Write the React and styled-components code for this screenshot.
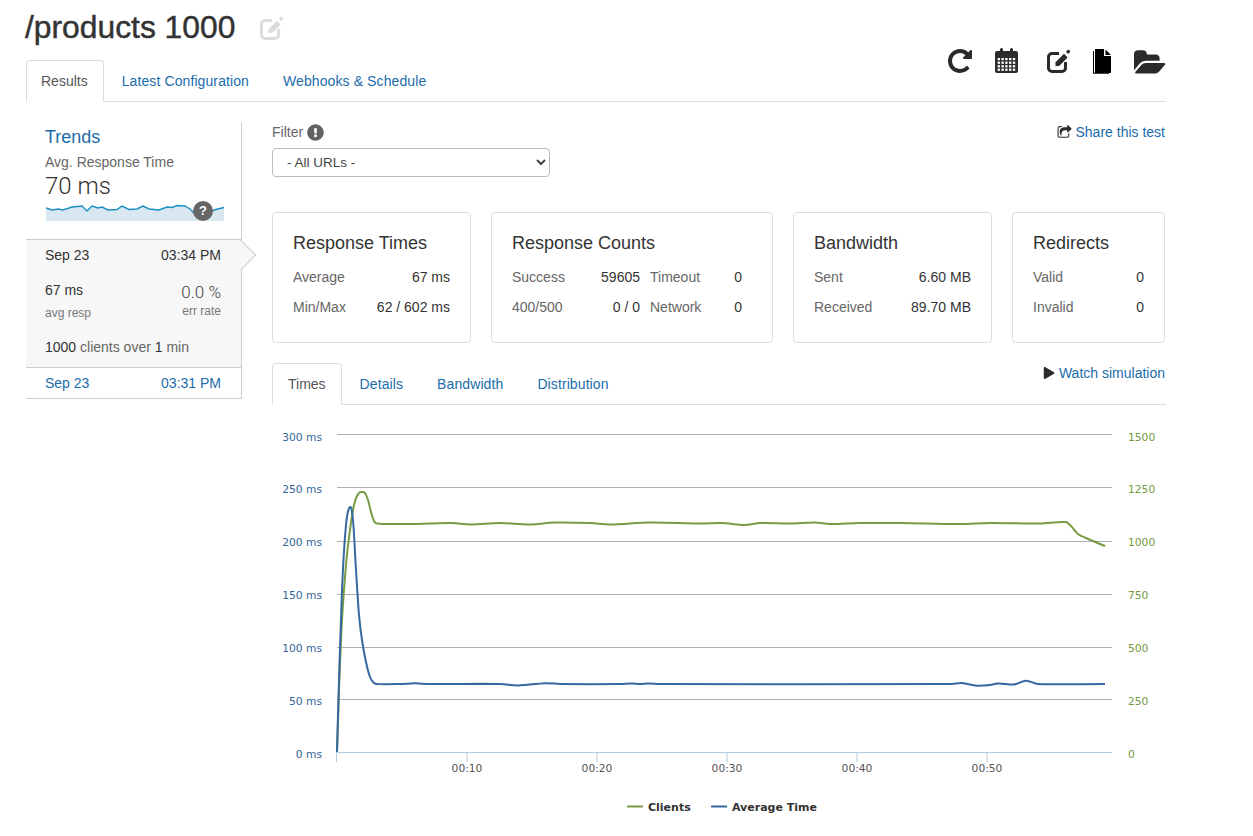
import React from 'react';
import styled, { createGlobalStyle } from 'styled-components';
import { FaExclamationCircle, FaPlay } from 'react-icons/fa';

const GlobalStyle = createGlobalStyle`
  html, body {
    margin: 0;
    background: #fff;
  }
  body {
    font-family: "Liberation Sans", Arial, sans-serif;
    font-size: 14px;
    line-height: 20px;
    color: #333;
  }
  * {
    box-sizing: border-box;
  }
`;

const Page = styled.div`
  width: 1140px;
  margin-left: 26px;
  height: 836px;
`;

const Title = styled.h1`
  display: flex;
  align-items: center;
  height: 60px;
  margin: 0 0 0 -1px;
  padding-bottom: 7px;
  font-size: 31.8px;
  line-height: 40px;
  font-weight: 400;
  color: #333;
  -webkit-text-stroke: 0.45px #333;
  svg {
    margin-left: 24px;
    margin-top: 2px;
    color: #dcdcdc;
    -webkit-text-stroke: 0;
  }
`;

const TopRow = styled.div`
  display: flex;
  justify-content: space-between;
  height: 42px;
  border-bottom: 1px solid #ddd;
`;

const Tabs = styled.div`
  display: flex;
  height: 42px;
`;

const Tab = styled.a`
  display: block;
  height: 42px;
  padding: 10px 15px 0 ${(p) => p.$left || 15}px;
  margin-right: 2px;
  letter-spacing: ${(p) => (p.$active ? '0' : '0.1px')};
  color: ${(p) => (p.$active ? '#555' : '#1b6cab')};
  background: ${(p) => (p.$active ? '#fff' : 'transparent')};
  border: 1px solid ${(p) => (p.$active ? '#ddd' : 'transparent')};
  border-bottom-color: ${(p) => (p.$active ? '#fff' : 'transparent')};
  border-radius: 4px 4px 0 0;
`;

const Toolbar = styled.div`
  display: flex;
  align-items: center;
  height: 28px;
  margin-top: -13px;
`;

const ToolSlot = styled.span`
  display: flex;
  justify-content: center;
  align-items: center;
  width: 32px;
  margin-left: ${(p) => p.$gap || 0}px;
  margin-bottom: ${(p) => p.$lift || 0}px;
  color: #2b2b2b;
`;

const Body = styled.div`
  display: flex;
  margin-top: 20px;
`;

const Side = styled.aside`
  width: 216px;
  height: 277px;
  border-right: 1px solid #ccc;
  border-bottom: 1px solid #ccc;
  flex-shrink: 0;
`;

const Trends = styled.div`
  height: 117px;
  padding: 4px 17px 0 19px;
`;

const TrendsTitle = styled.a`
  display: block;
  font-size: 18px;
  line-height: 22px;
  color: #1b6cab;
`;

const TrendsLabel = styled.div`
  margin-top: 4px;
  font-size: 14px;
  line-height: 20px;
  color: #666;
`;

const TrendsValue = styled.div`
  font-family: Roboto, "Liberation Sans", sans-serif;
  font-size: 24px;
  line-height: 28px;
  font-weight: 300;
  color: #333;
`;

const Spark = styled.div`
  position: relative;
  width: 178px;
  height: 20px;
  margin: 1px 0 0 1px;
`;

const HelpBadge = styled.span`
  position: absolute;
  right: 11px;
  top: 0;
  width: 20px;
  height: 20px;
  border-radius: 50%;
  background: #666;
  color: #fff;
  font-size: 13px;
  font-weight: 700;
  line-height: 20px;
  text-align: center;
`;

const ActiveRun = styled.div`
  position: relative;
  height: 129px;
  padding: 5px 20px 0 19px;
  background: #f7f7f7;
  border-top: 1px solid #ccc;
  border-bottom: 1px solid #ccc;
  &::after {
    content: '';
    position: absolute;
    top: 4px;
    right: -11px;
    width: 21px;
    height: 21px;
    background: #f7f7f7;
    border-top: 1px solid #ccc;
    border-right: 1px solid #ccc;
    transform: rotate(45deg) scale(0.98);
  }
`;

const RunRow = styled.div`
  display: flex;
  justify-content: space-between;
  position: relative;
  z-index: 1;
`;

const RunDate = styled(RunRow)`
  line-height: 20px;
  color: #333;
`;

const RunStats = styled(RunRow)`
  margin-top: 14px;
  line-height: 20px;
`;

const RunStat = styled.div`
  text-align: ${(p) => (p.$right ? 'right' : 'left')};
`;

const StatLight = styled.div`
  font-family: Roboto, "Liberation Sans", sans-serif;
  font-size: 17px;
  font-weight: 300;
  line-height: 22px;
  margin-top: 2px;
  color: #444;
`;

const StatDark = styled.div`
  line-height: 22px;
  color: #333;
`;

const StatCaption = styled.div`
  font-size: 12px;
  line-height: 20px;
  color: #777;
  margin-top: ${(p) => (p.$up ? '-2px' : '2px')};
`;

const RunSummary = styled.div`
  margin-top: 14px;
  color: #666;
  b {
    font-weight: 400;
    color: #333;
  }
`;

const OtherRun = styled.a`
  display: flex;
  justify-content: space-between;
  height: 30px;
  padding: 5px 20px 0 19px;
  color: #1b6cab;
`;

const Main = styled.main`
  margin-left: 30px;
  width: 894px;
`;

const FilterRow = styled.div`
  display: flex;
  justify-content: space-between;
`;

const FilterLabel = styled.div`
  display: flex;
  align-items: center;
  gap: 4px;
  height: 20px;
  color: #666;
  svg {
    color: #616161;
  }
`;

const ShareLink = styled.a`
  display: flex;
  align-items: center;
  gap: 4px;
  height: 20px;
  padding-right: 1px;
  color: #1b6cab;
  svg {
    color: #2b2b2b;
  }
`;

const FilterSelect = styled.select`
  display: block;
  width: 278px;
  height: 29px;
  margin-top: 6px;
  padding: 0 0 0 10px;
  font-family: "Liberation Sans", Arial, sans-serif;
  font-size: 13.5px;
  color: #444;
  background: #fff;
  border: 1px solid #bbb;
  border-radius: 4px;
`;

const Cards = styled.div`
  display: grid;
  grid-template-columns: 199px 282px 199px 153px;
  gap: 20px;
  margin-top: 35px;
`;

const Card = styled.section`
  height: 131px;
  padding: 20px 20px 0;
  border: 1px solid #ddd;
  border-radius: 4px;
`;

const CardTitle = styled.h3`
  margin: 0 0 14px;
  font-size: 18px;
  line-height: 20px;
  font-weight: 400;
  color: #333;
`;

const Stats = styled.div`
  display: grid;
  grid-template-columns: ${(p) => p.$cols || '1fr auto'};
  grid-auto-rows: 30px;
  line-height: 20px;
`;

const StatLabel = styled.span`
  color: #666;
`;

const StatValue = styled.span`
  text-align: right;
  color: #333;
`;

const SubTabRow = styled.div`
  display: flex;
  justify-content: space-between;
  height: 42px;
  margin-top: 20px;
  border-bottom: 1px solid #ddd;
`;

const WatchLink = styled.a`
  display: flex;
  align-items: center;
  gap: 4px;
  height: 20px;
  padding-right: 1px;
  color: #1b6cab;
  svg {
    color: #2b2b2b;
  }
`;

const Chart = styled.svg`
  display: block;
  text {
    font-family: "DejaVu Sans", Verdana, sans-serif;
    font-size: 10.7px;
  }
  text.legend {
    font-size: 11px;
    font-weight: 700;
    fill: #333;
  }
`;

const glyphs = {
  repeat:
    'M1664 256v448q0 26-19 45t-45 19h-448q-42 0-59-40-17-39 14-69l138-138q-148-137-349-137-104 0-198.5 40.5t-163.5 109.5-109.5 163.5-40.5 198.5 40.5 198.5 109.5 163.5 163.5 109.5 198.5 40.5q119 0 225-52t179-147q7-10 23-12 15 0 25 9l137 138q9 8 9.5 20.5t-7.5 22.5q-109 132-264 204.5t-327 72.5q-156 0-298-61t-245-164-164-245-61-298 61-298 164-245 245-164 298-61q147 0 284.5 55.5t244.5 156.5l130-129q29-31 70-14 39 17 39 59z',
  share:
    'M1472 989v259q0 119-84.5 203.5t-203.5 84.5h-832q-119 0-203.5-84.5t-84.5-203.5v-832q0-119 84.5-203.5t203.5-84.5h255q13 0 22.5 9.5t9.5 22.5q0 27-26 32-77 26-133 60-10 4-16 4h-112q-66 0-113 47t-47 113v832q0 66 47 113t113 47h832q66 0 113-47t47-113v-214q0-19 18-29 28-13 54-37 16-16 35-8 21 9 21 29zm237-496l-384 384q-18 19-45 19-12 0-25-5-39-17-39-59v-192h-160q-323 0-438 131-119 137-74 473 3 23-20 34-8 2-12 2-16 0-26-13-10-14-21-31t-39.5-68.5-49.5-99.5-38.5-114-17.5-122q0-49 3.5-91t14-90 28-88 47-81.5 68.5-74 94.5-61.5 124.5-48.5 159.5-30.5 196.5-11h160v-192q0-42 39-59 13-5 25-5 26 0 45 19l384 384q19 19 19 45t-19 45z',
  folder:
    'M1879 952q0 31-31 66l-336 396q-43 51-120.5 86.5t-143.5 35.5h-1088q-34 0-60.5-13t-26.5-43q0-31 31-66l336-396q43-51 120.5-86.5t143.5-35.5h1088q34 0 60.5 13t26.5 43zm-343-344v160h-832q-94 0-197 47.5t-164 119.5l-337 396-5 6q0-4-.5-12.5t-.5-12.5v-960q0-92 66-158t158-66h320q92 0 158 66t66 158v32h544q92 0 158 66t66 158z',
};

const Glyph = ({ name, size, box = '0 0 1792 1792' }) => (
  <svg width={size} height={size} viewBox={box} fill="currentColor">
    <path d={glyphs[name]} />
  </svg>
);

const EditIcon = () => (
  <svg width="25" height="24" viewBox="0 0 25 24" fill="currentColor">
    <path
      d="M13 4.5H6A3.5 3.5 0 0 0 2.5 8v11A3.5 3.5 0 0 0 6 22.5h10a3.5 3.5 0 0 0 3.5-3.5v-6"
      fill="none"
      stroke="currentColor"
      strokeWidth="3"
    />
    <path d="M9.5 17v-3.8L18 4.8l3.6 3.6L13.2 17z" />
    <path d="M20 2.8l1.7-1.7a1 1 0 0 1 1.4 0l.7.7a1 1 0 0 1 0 1.4L22 5z" />
  </svg>
);

const CalendarIcon = () => (
  <svg width="23" height="25" viewBox="0 0 23 25">
    <path
      d="M2 3h3V1.5a1.5 1.5 0 0 1 3 0V3h7V1.5a1.5 1.5 0 0 1 3 0V3h3a2 2 0 0 1 2 2v18a2 2 0 0 1-2 2H2a2 2 0 0 1-2-2V5a2 2 0 0 1 2-2z"
      fill="#2b2b2b"
    />
    {[10, 13.6, 17.2, 20.6].map((y) =>
      [2.6, 6.4, 10.2, 14, 17.8].map((x) => (
        <rect key={`${x}-${y}`} x={x} y={y} width="2.4" height="2.2" fill="#fff" />
      ))
    )}
  </svg>
);

const FilesIcon = () => (
  <svg width="20" height="25" viewBox="0 0 20 25">
    <path d="M0 2h1v21.8h15v1H0z" fill="#000" />
    <path d="M2 0h9v7h7v17H2z" fill="#000" />
    <path d="M12.5 0.5L18 6h-5.5z" fill="#000" />
  </svg>
);

// smooth line through the points, tangents from the neighbours so x never runs back
const smooth = (pts) => {
  const slope = (i) => {
    const a = pts[i - 1] || pts[i];
    const b = pts[i + 1] || pts[i];
    return (b[1] - a[1]) / (b[0] - a[0]);
  };
  let d = `M${pts[0][0]} ${pts[0][1]}`;
  for (let i = 0; i < pts.length - 1; i++) {
    const [x1, y1] = pts[i];
    const [x2, y2] = pts[i + 1];
    const dx = (x2 - x1) / 3;
    const c1y = y1 + slope(i) * dx;
    const c2y = y2 - slope(i + 1) * dx;
    d += `C${(x1 + dx).toFixed(1)} ${c1y.toFixed(1)} ${(x2 - dx).toFixed(1)} ${c2y.toFixed(1)} ${x2} ${y2}`;
  }
  return d;
};

const clientsLine = [
  [337, 752], [339, 690], [342, 620], [346, 565], [350, 530], [354, 505], [358, 494], [362, 492],
  [365, 493], [368, 500], [371, 512], [374, 521], [377, 523.5], [400, 524], [430, 523.5], [452, 523],
  [470, 524.5], [500, 523], [530, 524.5], [555, 522.5], [590, 523], [610, 524.5], [650, 522.5],
  [700, 523.5], [722, 523], [745, 525], [760, 523], [790, 523.5], [815, 522.5], [830, 524],
  [860, 523], [900, 523], [960, 524], [990, 523], [1040, 523.5], [1066, 522], [1071, 526],
  [1078, 534], [1086, 538], [1105, 546],
];

const timeLine = [
  [337, 752], [339, 680], [342, 590], [346, 525], [350, 507], [353, 520], [356, 570], [359, 615],
  [362, 640], [366, 662], [370, 677], [374, 683], [378, 684], [400, 684], [415, 683.3], [430, 684], [500, 684],
  [518, 685.5], [545, 683.2], [560, 684], [620, 684], [632, 683.4], [640, 684], [648, 683.4],
  [660, 684], [950, 684], [962, 683], [975, 685.5], [988, 685.3], [998, 683.5], [1014, 684.5],
  [1026, 680.8], [1038, 684], [1105, 684],
];

const grid = [
  { y: 434.5, base: 440.5, ms: '300 ms', n: '1500' },
  { y: 487.5, base: 492.5, ms: '250 ms', n: '1250' },
  { y: 541.5, base: 545.5, ms: '200 ms', n: '1000' },
  { y: 594.5, base: 598.5, ms: '150 ms', n: '750' },
  { y: 647.5, base: 651.5, ms: '100 ms', n: '500' },
  { y: 699.5, base: 704.5, ms: '50 ms', n: '250' },
  { y: 752.5, base: 757.5, ms: '0 ms', n: '0' },
];

const ticks = [
  { x: 467, t: '00:10' },
  { x: 597, t: '00:20' },
  { x: 727, t: '00:30' },
  { x: 857, t: '00:40' },
  { x: 987, t: '00:50' },
];

const sparkPts = [
  [0, 7], [6, 9], [12, 8], [17, 9], [26, 6], [36, 5], [41, 10], [46, 5], [52, 7], [56, 6], [62, 9],
  [71, 8.5], [76, 5], [83, 8.5], [91, 8], [97, 5], [103, 8], [113, 9], [121, 6], [126, 6.5], [131, 4.5],
  [139, 5], [144, 8], [150, 14], [160, 13], [168, 9], [178, 6.5],
];

const sparkLine = sparkPts.map((p) => p.join(',')).join(' ');

function TimesChart() {
  return (
    <Chart width="894" height="420" viewBox="272 405 894 420">
      {grid.map((g, i) => (
        <g key={g.ms}>
          <line
            x1="337"
            x2="1112"
            y1={g.y}
            y2={g.y}
            stroke={i === grid.length - 1 ? '#b4cbdd' : '#b0b0b0'}
            strokeWidth="1"
          />
          <text x="322" y={g.base} textAnchor="end" fill="#33659b">{g.ms}</text>
          <text x="1128" y={g.base} fill="#6f9a3c">{g.n}</text>
        </g>
      ))}
      <line x1="336.5" x2="336.5" y1="752" y2="762" stroke="#b4cbdd" />
      {ticks.map((t) => (
        <g key={t.t}>
          <line x1={t.x} x2={t.x} y1="752" y2="762" stroke="#b4cbdd" />
          <text x={t.x} y="772" textAnchor="middle" fill="#555">{t.t}</text>
        </g>
      ))}
      <path d={smooth(clientsLine)} fill="none" stroke="#779b43" strokeWidth="2" />
      <path d={smooth(timeLine)} fill="none" stroke="#35689e" strokeWidth="2" />
      <line x1="627" x2="643" y1="806.5" y2="806.5" stroke="#779b43" strokeWidth="2" />
      <text className="legend" x="648" y="811">Clients</text>
      <line x1="711" x2="727" y1="806.5" y2="806.5" stroke="#35689e" strokeWidth="2" />
      <text className="legend" x="732" y="811">Average Time</text>
    </Chart>
  );
}

export default function App() {
  return (
    <Page>
      <GlobalStyle />
      <Title>
        /products 1000
        <EditIcon />
      </Title>
      <TopRow>
        <Tabs>
          <Tab $active $left={14}>Results</Tab>
          <Tab>Latest Configuration</Tab>
          <Tab>Webhooks &amp; Schedule</Tab>
        </Tabs>
        <Toolbar>
          <ToolSlot><Glyph name="repeat" size={28} /></ToolSlot>
          <ToolSlot $gap={14} $lift={2}><CalendarIcon /></ToolSlot>
          <ToolSlot $gap={20}><EditIcon /></ToolSlot>
          <ToolSlot $gap={13}><FilesIcon /></ToolSlot>
          <ToolSlot $gap={15}><Glyph name="folder" size={32} box="0 -180 1920 1920" /></ToolSlot>
        </Toolbar>
      </TopRow>
      <Body>
        <Side>
          <Trends>
            <TrendsTitle>Trends</TrendsTitle>
            <TrendsLabel>Avg. Response Time</TrendsLabel>
            <TrendsValue>70 ms</TrendsValue>
            <Spark>
              <svg width="178" height="20" viewBox="0 0 178 20">
                <polygon points={`0,20 ${sparkLine} 178,20`} fill="#d9e7f1" />
                <polyline points={sparkLine} fill="none" stroke="#1b8fc4" strokeWidth="1.4" />
              </svg>
              <HelpBadge>?</HelpBadge>
            </Spark>
          </Trends>
          <ActiveRun>
            <RunDate>
              <span>Sep 23</span>
              <span>03:34 PM</span>
            </RunDate>
            <RunStats>
              <RunStat>
                <StatDark>67 ms</StatDark>
                <StatCaption>avg resp</StatCaption>
              </RunStat>
              <RunStat $right>
                <StatLight>0.0 %</StatLight>
                <StatCaption $up>err rate</StatCaption>
              </RunStat>
            </RunStats>
            <RunSummary>
              <b>1000</b> clients over <b>1</b> min
            </RunSummary>
          </ActiveRun>
          <OtherRun>
            <span>Sep 23</span>
            <span>03:31 PM</span>
          </OtherRun>
        </Side>
        <Main>
          <FilterRow>
            <FilterLabel>
              Filter <FaExclamationCircle size={17} />
            </FilterLabel>
            <ShareLink>
              <Glyph name="share" size={15} /> Share this test
            </ShareLink>
          </FilterRow>
          <FilterSelect defaultValue="all">
            <option value="all">- All URLs -</option>
          </FilterSelect>
          <Cards>
            <Card>
              <CardTitle>Response Times</CardTitle>
              <Stats>
                <StatLabel>Average</StatLabel>
                <StatValue>67 ms</StatValue>
                <StatLabel>Min/Max</StatLabel>
                <StatValue>62 / 602 ms</StatValue>
              </Stats>
            </Card>
            <Card>
              <CardTitle>Response Counts</CardTitle>
              <Stats $cols="1fr 58px 10px 1fr 22px 10px">
                <StatLabel>Success</StatLabel>
                <StatValue>59605</StatValue>
                <span />
                <StatLabel>Timeout</StatLabel>
                <StatValue>0</StatValue>
                <span />
                <StatLabel>400/500</StatLabel>
                <StatValue>0 / 0</StatValue>
                <span />
                <StatLabel>Network</StatLabel>
                <StatValue>0</StatValue>
                <span />
              </Stats>
            </Card>
            <Card>
              <CardTitle>Bandwidth</CardTitle>
              <Stats>
                <StatLabel>Sent</StatLabel>
                <StatValue>6.60 MB</StatValue>
                <StatLabel>Received</StatLabel>
                <StatValue>89.70 MB</StatValue>
              </Stats>
            </Card>
            <Card>
              <CardTitle>Redirects</CardTitle>
              <Stats>
                <StatLabel>Valid</StatLabel>
                <StatValue>0</StatValue>
                <StatLabel>Invalid</StatLabel>
                <StatValue>0</StatValue>
              </Stats>
            </Card>
          </Cards>
          <SubTabRow>
            <Tabs>
              <Tab $active>Times</Tab>
              <Tab>Details</Tab>
              <Tab>Bandwidth</Tab>
              <Tab>Distribution</Tab>
            </Tabs>
            <WatchLink>
              <FaPlay size={12} /> Watch simulation
            </WatchLink>
          </SubTabRow>
          <TimesChart />
        </Main>
      </Body>
    </Page>
  );
}
